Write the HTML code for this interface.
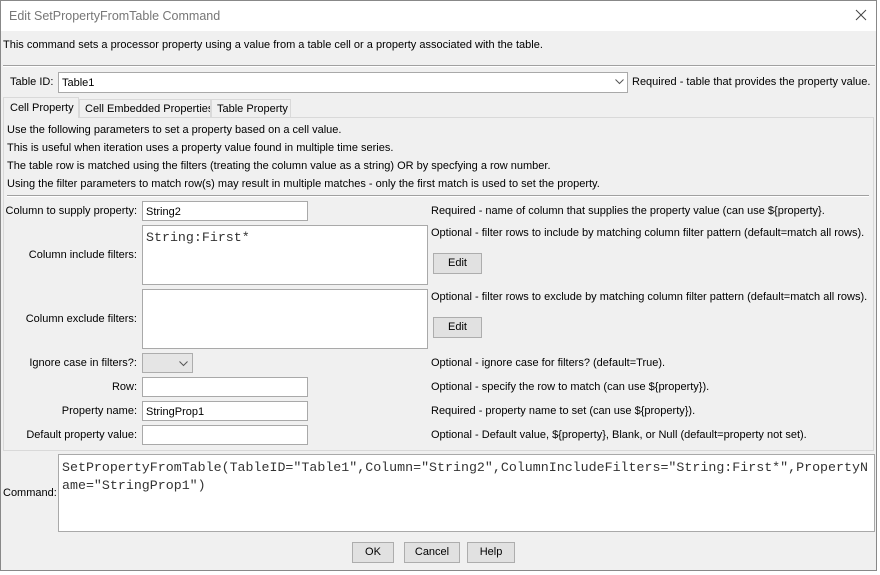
<!DOCTYPE html>
<html><head><meta charset="utf-8"><style>
*{box-sizing:border-box;margin:0;padding:0}
body{width:880px;height:575px;background:#fff;position:relative;overflow:hidden;font-family:"Liberation Sans",sans-serif;font-size:11px;color:#000}
.a{position:absolute;white-space:nowrap}
.win{position:absolute;left:0;top:0;width:877px;height:571px;background:#f0f0f0;border:1px solid #888}
.title{position:absolute;left:1px;top:1px;width:875px;height:30px;background:#fff}
.inp{position:absolute;background:#fff;border:1px solid #a9a9a9;padding:3px 3px;line-height:14px}
.btn{position:absolute;background:#e1e1e1;border:1px solid #adadad;text-align:center;line-height:19px}
.r{text-align:right}
.mono{font-family:"Liberation Mono",monospace;font-size:13.3px;color:#333}
</style></head><body>
<div class="win"></div>
<div class="title"></div>
<div class="a" style="left:9px;top:9px;font-size:12.5px;color:#777">Edit SetPropertyFromTable Command</div>
<svg class="a" style="left:855px;top:9px" width="12" height="12"><path d="M1 1L11 11M11 1L1 11" stroke="#444" stroke-width="1"/></svg>
<div class="a" style="left:3px;top:39px">This command sets a processor property using a value from a table cell or a property associated with the table.</div>
<div class="a" style="left:3px;top:65px;width:872px;height:2px;border-top:1px solid #a0a0a0;border-bottom:1px solid #fff"></div>
<div class="a" style="left:10px;top:76px">Table ID:</div>
<div class="inp" style="left:58px;top:72px;width:570px;height:21px">Table1</div>
<svg class="a" style="left:615px;top:79px" width="9" height="6"><path d="M0.5 0.5L4.5 4.5L8.5 0.5" stroke="#555" fill="none"/></svg>
<div class="a" style="left:632px;top:76px">Required - table that provides the property value.</div>
<div class="a" style="left:3px;top:117px;width:871px;height:334px;border:1px solid #d9d9d9;background:#f0f0f0"></div>
<div class="a" style="left:3px;top:97px;width:76px;height:21px;border:1px solid #d9d9d9;border-bottom:none;background:#f0f0f0;padding:4px 0 0 6px">Cell Property</div>
<div class="a" style="left:79px;top:99px;width:132px;height:19px;border:1px solid #d9d9d9;background:#f0f0f0;padding:3px 0 0 5px;overflow:hidden">Cell Embedded Properties</div>
<div class="a" style="left:211px;top:99px;width:80px;height:19px;border:1px solid #d9d9d9;background:#f0f0f0;padding:3px 0 0 5px">Table Property</div>
<div class="a" style="left:7px;top:124px">Use the following parameters to set a property based on a cell value.</div>
<div class="a" style="left:7px;top:142px">This is useful when iteration uses a property value found in multiple time series.</div>
<div class="a" style="left:7px;top:160px">The table row is matched using the filters (treating the column value as a string) OR by specfying a row number.</div>
<div class="a" style="left:7px;top:178px">Using the filter parameters to match row(s) may result in multiple matches - only the first match is used to set the property.</div>
<div class="a" style="left:7px;top:195px;width:862px;height:2px;border-top:1px solid #a0a0a0;border-bottom:1px solid #fff"></div>
<div class="a r" style="left:0;width:137px;top:205px">Column to supply property:</div>
<div class="inp" style="left:142px;top:201px;width:166px;height:20px">String2</div>
<div class="a" style="left:431px;top:205px">Required - name of column that supplies the property value (can use ${property}.</div>
<div class="a r" style="left:0;width:137px;top:249px">Column include filters:</div>
<div class="inp mono" style="left:142px;top:225px;width:286px;height:60px;padding-top:5px">String:First*</div>
<div class="a" style="left:431px;top:227px">Optional - filter rows to include by matching column filter pattern (default=match all rows).</div>
<div class="btn" style="left:433px;top:253px;width:49px;height:21px">Edit</div>
<div class="a r" style="left:0;width:137px;top:313px">Column exclude filters:</div>
<div class="inp" style="left:142px;top:289px;width:286px;height:60px"></div>
<div class="a" style="left:431px;top:291px">Optional - filter rows to exclude by matching column filter pattern (default=match all rows).</div>
<div class="btn" style="left:433px;top:317px;width:49px;height:21px">Edit</div>
<div class="a r" style="left:0;width:137px;top:357px">Ignore case in filters?:</div>
<div class="a" style="left:142px;top:353px;width:51px;height:20px;background:#e5e5e5;border:1px solid #adadad"></div>
<svg class="a" style="left:179px;top:361px" width="9" height="6"><path d="M0.5 0.5L4.5 4.5L8.5 0.5" stroke="#555" fill="none"/></svg>
<div class="a" style="left:431px;top:357px">Optional - ignore case for filters? (default=True).</div>
<div class="a r" style="left:0;width:137px;top:381px">Row:</div>
<div class="inp" style="left:142px;top:377px;width:166px;height:20px"></div>
<div class="a" style="left:431px;top:381px">Optional - specify the row to match (can use ${property}).</div>
<div class="a r" style="left:0;width:137px;top:405px">Property name:</div>
<div class="inp" style="left:142px;top:401px;width:166px;height:20px">StringProp1</div>
<div class="a" style="left:431px;top:405px">Required - property name to set (can use ${property}).</div>
<div class="a r" style="left:0;width:137px;top:429px">Default property value:</div>
<div class="inp" style="left:142px;top:425px;width:166px;height:20px"></div>
<div class="a" style="left:431px;top:429px">Optional - Default value, ${property}, Blank, or Null (default=property not set).</div>
<div class="a" style="left:3px;top:487px">Command:</div>
<div class="inp mono" style="left:58px;top:454px;width:817px;height:78px;white-space:normal;word-break:break-all;line-height:18px;padding:4px 3px">SetPropertyFromTable(TableID="Table1",Column="String2",ColumnIncludeFilters="String:First*",PropertyName="StringProp1")</div>
<div class="btn" style="left:352px;top:542px;width:42px;height:21px">OK</div>
<div class="btn" style="left:404px;top:542px;width:56px;height:21px">Cancel</div>
<div class="btn" style="left:467px;top:542px;width:48px;height:21px">Help</div>
</body></html>
